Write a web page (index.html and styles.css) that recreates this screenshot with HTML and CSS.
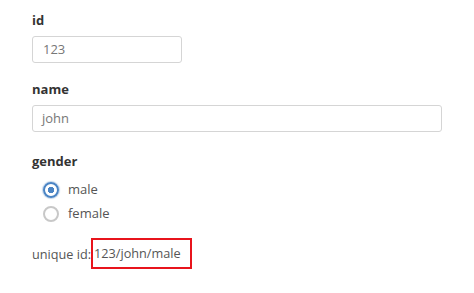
FILE: index.html
```html
<!DOCTYPE html>
<html>
<head>
<meta charset="utf-8">
<link rel="stylesheet" href="styles.css">
</head>
<body>
<div class="form">
  <div class="field">
    <div class="label">id</div>
    <div class="input short">123</div>
  </div>
  <div class="field">
    <div class="label">name</div>
    <div class="input long">john</div>
  </div>
  <div class="field">
    <div class="label">gender</div>
    <div class="radios">
      <div class="radio-row"><span class="radio checked"></span><span>male</span></div>
      <div class="radio-row"><span class="radio"></span><span>female</span></div>
    </div>
  </div>
  <div class="unique">unique id:<span class="hl">123/john/male</span></div>
</div>
</body>
</html>
```
FILE: styles.css
```css
html, body { margin: 0; padding: 0; background: #fff; }
body {
  font-family: "Open Sans", "Noto Sans", sans-serif;
  font-size: 13px;
  color: #555;
}
.form {
  padding: 11px 0 0 32px;
  display: flex;
  flex-direction: column;
}
.field { display: flex; flex-direction: column; margin-bottom: 17px; }
.field:nth-child(2) { margin-bottom: 20px; }
.field:nth-child(3) { margin-bottom: 16px; }
.label {
  font-weight: 700;
  color: #333;
  line-height: 18px;
  margin-bottom: 7px;
}
.input {
  box-sizing: border-box;
  height: 27px;
  border: 1px solid #d5d5d5;
  border-radius: 3px;
  padding: 0 10px;
  line-height: 25px;
  color: #777;
}
.input.short { width: 150px; }
.input.long { width: 410px; padding-left: 9px; }
.radios { display: flex; flex-direction: column; gap: 7px; padding-left: 11px; margin-top: 4px; }
.radio-row { display: flex; align-items: center; gap: 9px; height: 17px; line-height: 17px; }
.radio {
  box-sizing: border-box;
  width: 16px; height: 16px;
  border-radius: 50%;
  border: 2px solid #c8c8c8;
  background: #fff;
}
.radio.checked {
  border: 2px solid #4a84c4;
  background: radial-gradient(circle, #4a84c4 0 3px, #fff 3.5px);
  box-shadow: 0 0 1px 1px rgba(74,132,196,0.35);
}
.unique { display: flex; align-items: center; line-height: 18px; font-size: 12.7px; }
.hl {
  border: 2px solid #e8141c;
  padding: 4px 9px 5px 1px;
}
```
